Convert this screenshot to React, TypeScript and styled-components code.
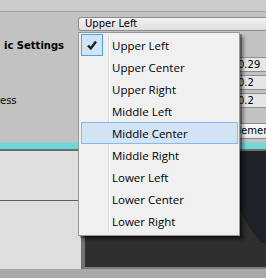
import React from "react";
import styled, { createGlobalStyle, css } from "styled-components";

const GlobalStyle = createGlobalStyle`
  html, body {
    margin: 0;
    padding: 0;
    background: #c2c2c2;
  }
  body {
    font-family: "DejaVu Sans", Verdana, sans-serif;
  }
`;

const Screen = styled.div`
  position: relative;
  width: 266px;
  height: 278px;
  overflow: hidden;
  background: #c2c2c2;
  display: flex;
  flex-direction: column;
`;

const TitleStrip = styled.div`
  height: 11px;
  flex: none;
  background: #cbcbcb;
  border-bottom: 1px solid #a2a2a2;
`;

const Inspector = styled.div`
  display: flex;
  flex-direction: column;
  padding-top: 5px;
  flex: none;
`;

const PropRow = styled.div<{ $h: number; $mt?: number }>`
  display: grid;
  grid-template-columns: 78px 152px 1fr;
  height: ${(p) => p.$h}px;
  margin-top: ${(p) => p.$mt ?? 0}px;
  align-items: start;
`;

const Label = styled.div<{ $bold?: boolean; $pt?: number; $pl?: number }>`
  white-space: nowrap;
  font-size: 10px;
  color: #000;
  padding-top: ${(p) => p.$pt ?? 0}px;
  padding-left: ${(p) => p.$pl ?? 0}px;
  ${(p) =>
    p.$bold &&
    css`
      font-weight: bold;
    `}
`;

const DropButton = styled.div`
  grid-column: 2 / 4;
  height: 12px;
  width: 200px;
  border: 1px solid #8c8c8c;
  border-radius: 3px;
  background: linear-gradient(#f4f4f4, #dedede);
  font-size: 10px;
  line-height: 12px;
  padding-left: 6px;
  color: #000;
`;

const SliderTrack = styled.div`
  height: 2px;
  margin: 6px 6px 0 4px;
  background: #8a8a8a;
`;

const NumberField = styled.div`
  height: 13px;
  width: 50px;
  border: 1px solid #8e8e8e;
  border-radius: 2px;
  background: #e6e6e6;
  font-size: 10px;
  line-height: 13px;
  padding-left: 7px;
  color: #000;
`;

const WideButton = styled.div`
  grid-column: 3;
  height: 14px;
  width: 60px;
  border: 1px solid #8c8c8c;
  border-radius: 3px;
  background: linear-gradient(#fafafa, #e8e8e8);
  font-size: 10px;
  line-height: 14px;
  padding-left: 1px;
  color: #000;
  white-space: nowrap;
`;

const AccentBar = styled.div`
  height: 6px;
  margin-top: 3px;
  background: #6dd8d8;
  border-top: 1px solid #9fcaca;
  border-bottom: 2px solid #6e6e6e;
  flex: none;
`;

const Lower = styled.div`
  display: flex;
  height: 118px;
  flex: none;
`;

const SidePanel = styled.div`
  width: 81px;
  background: #dedede;
  display: flex;
  flex-direction: column;
`;

const SideSection = styled.div<{ $h?: number }>`
  height: ${(p) => (p.$h ? `${p.$h}px` : "auto")};
  flex: ${(p) => (p.$h ? "none" : "1")};
  border-bottom: ${(p) => (p.$h ? "1px solid #5c5c5c" : "none")};
`;

const Viewport = styled.div`
  flex: 1;
  background: #2f2f2f;
  border-left: 4px solid #727272;
  border-bottom: 2px solid #7c7c7c;
  overflow: hidden;
  display: flex;
`;

const BottomStrip = styled.div`
  flex: 1;
  background: #a8a8a8;
`;

const Menu = styled.div`
  position: absolute;
  left: 78px;
  top: 32px;
  width: 157px;
  border: 1px solid #979797;
  background: #f0f0f0;
  padding: 1px 1px 3px 2px;
  box-shadow: 2px 2px 0 rgba(0, 0, 0, 0.3), 4px 4px 3px rgba(0, 0, 0, 0.35);
  &::before {
    content: "";
    position: absolute;
    left: 29px;
    top: 2px;
    bottom: 3px;
    width: 1px;
    background: #dadada;
    box-shadow: 1px 0 0 #ffffff;
  }
`;

const MenuItem = styled.div<{ $hot?: boolean }>`
  position: relative;
  display: flex;
  align-items: center;
  height: 22px;
  box-sizing: border-box;
  border: 1px solid ${(p) => (p.$hot ? "#88b9ea" : "transparent")};
  background: ${(p) => (p.$hot ? "#d2e3f5" : "transparent")};
  font-family: "Open Sans", "Noto Sans", sans-serif;
  font-size: 11.5px;
  color: #000;
`;

const CheckBox = styled.div<{ $on?: boolean }>`
  width: 22px;
  height: 22px;
  margin: -1px 0 0 -1px;
  box-sizing: border-box;
  border: 1px solid ${(p) => (p.$on ? "#4fa3e3" : "transparent")};
  background: ${(p) => (p.$on ? "#cfe5f7" : "transparent")};
  display: flex;
  align-items: center;
  justify-content: center;
  flex: none;
`;

const ItemText = styled.span`
  margin-left: 9px;
`;

const options = [
  "Upper Left",
  "Upper Center",
  "Upper Right",
  "Middle Left",
  "Middle Center",
  "Middle Right",
  "Lower Left",
  "Lower Center",
  "Lower Right",
];

export default function App() {
  return (
    <>
      <GlobalStyle />
      <Screen>
        <TitleStrip />
        <Inspector>
          <PropRow $h={14}>
            <div />
            <DropButton>Upper Left</DropButton>
          </PropRow>
          <PropRow $h={26}>
            <Label $bold $pt={9} $pl={4}>
              ic Settings
            </Label>
          </PropRow>
          <PropRow $h={18}>
            <div />
            <SliderTrack />
            <NumberField>0.29</NumberField>
          </PropRow>
          <PropRow $h={18}>
            <div />
            <SliderTrack />
            <NumberField>0.2</NumberField>
          </PropRow>
          <PropRow $h={18}>
            <Label $pt={2}>ess</Label>
            <SliderTrack />
            <NumberField>0.2</NumberField>
          </PropRow>
          <PropRow $h={16} $mt={12}>
            <div />
            <div />
            <WideButton>Element</WideButton>
          </PropRow>
        </Inspector>
        <AccentBar />
        <Lower>
          <SidePanel>
            <SideSection $h={49} />
            <SideSection />
          </SidePanel>
          <Viewport>
            <svg width="181" height="116" viewBox="0 0 181 116">
              <path
                d="M148 0 C138 30 152 62 176 92 L181 92 L181 0 Z"
                fill="#1d2128"
              />
            </svg>
          </Viewport>
        </Lower>
        <BottomStrip />
        <Menu>
          {options.map((o, i) => (
            <MenuItem key={o} $hot={o === "Middle Center"}>
              <CheckBox $on={i === 0}>
                {i === 0 && (
                  <svg width="12" height="12" viewBox="0 0 12 12">
                    <path
                      d="M2 6.5 L4.8 9.5 L10 2.5"
                      stroke="#1f1f1f"
                      strokeWidth="2.4"
                      fill="none"
                    />
                  </svg>
                )}
              </CheckBox>
              <ItemText>{o}</ItemText>
            </MenuItem>
          ))}
        </Menu>
      </Screen>
    </>
  );
}
